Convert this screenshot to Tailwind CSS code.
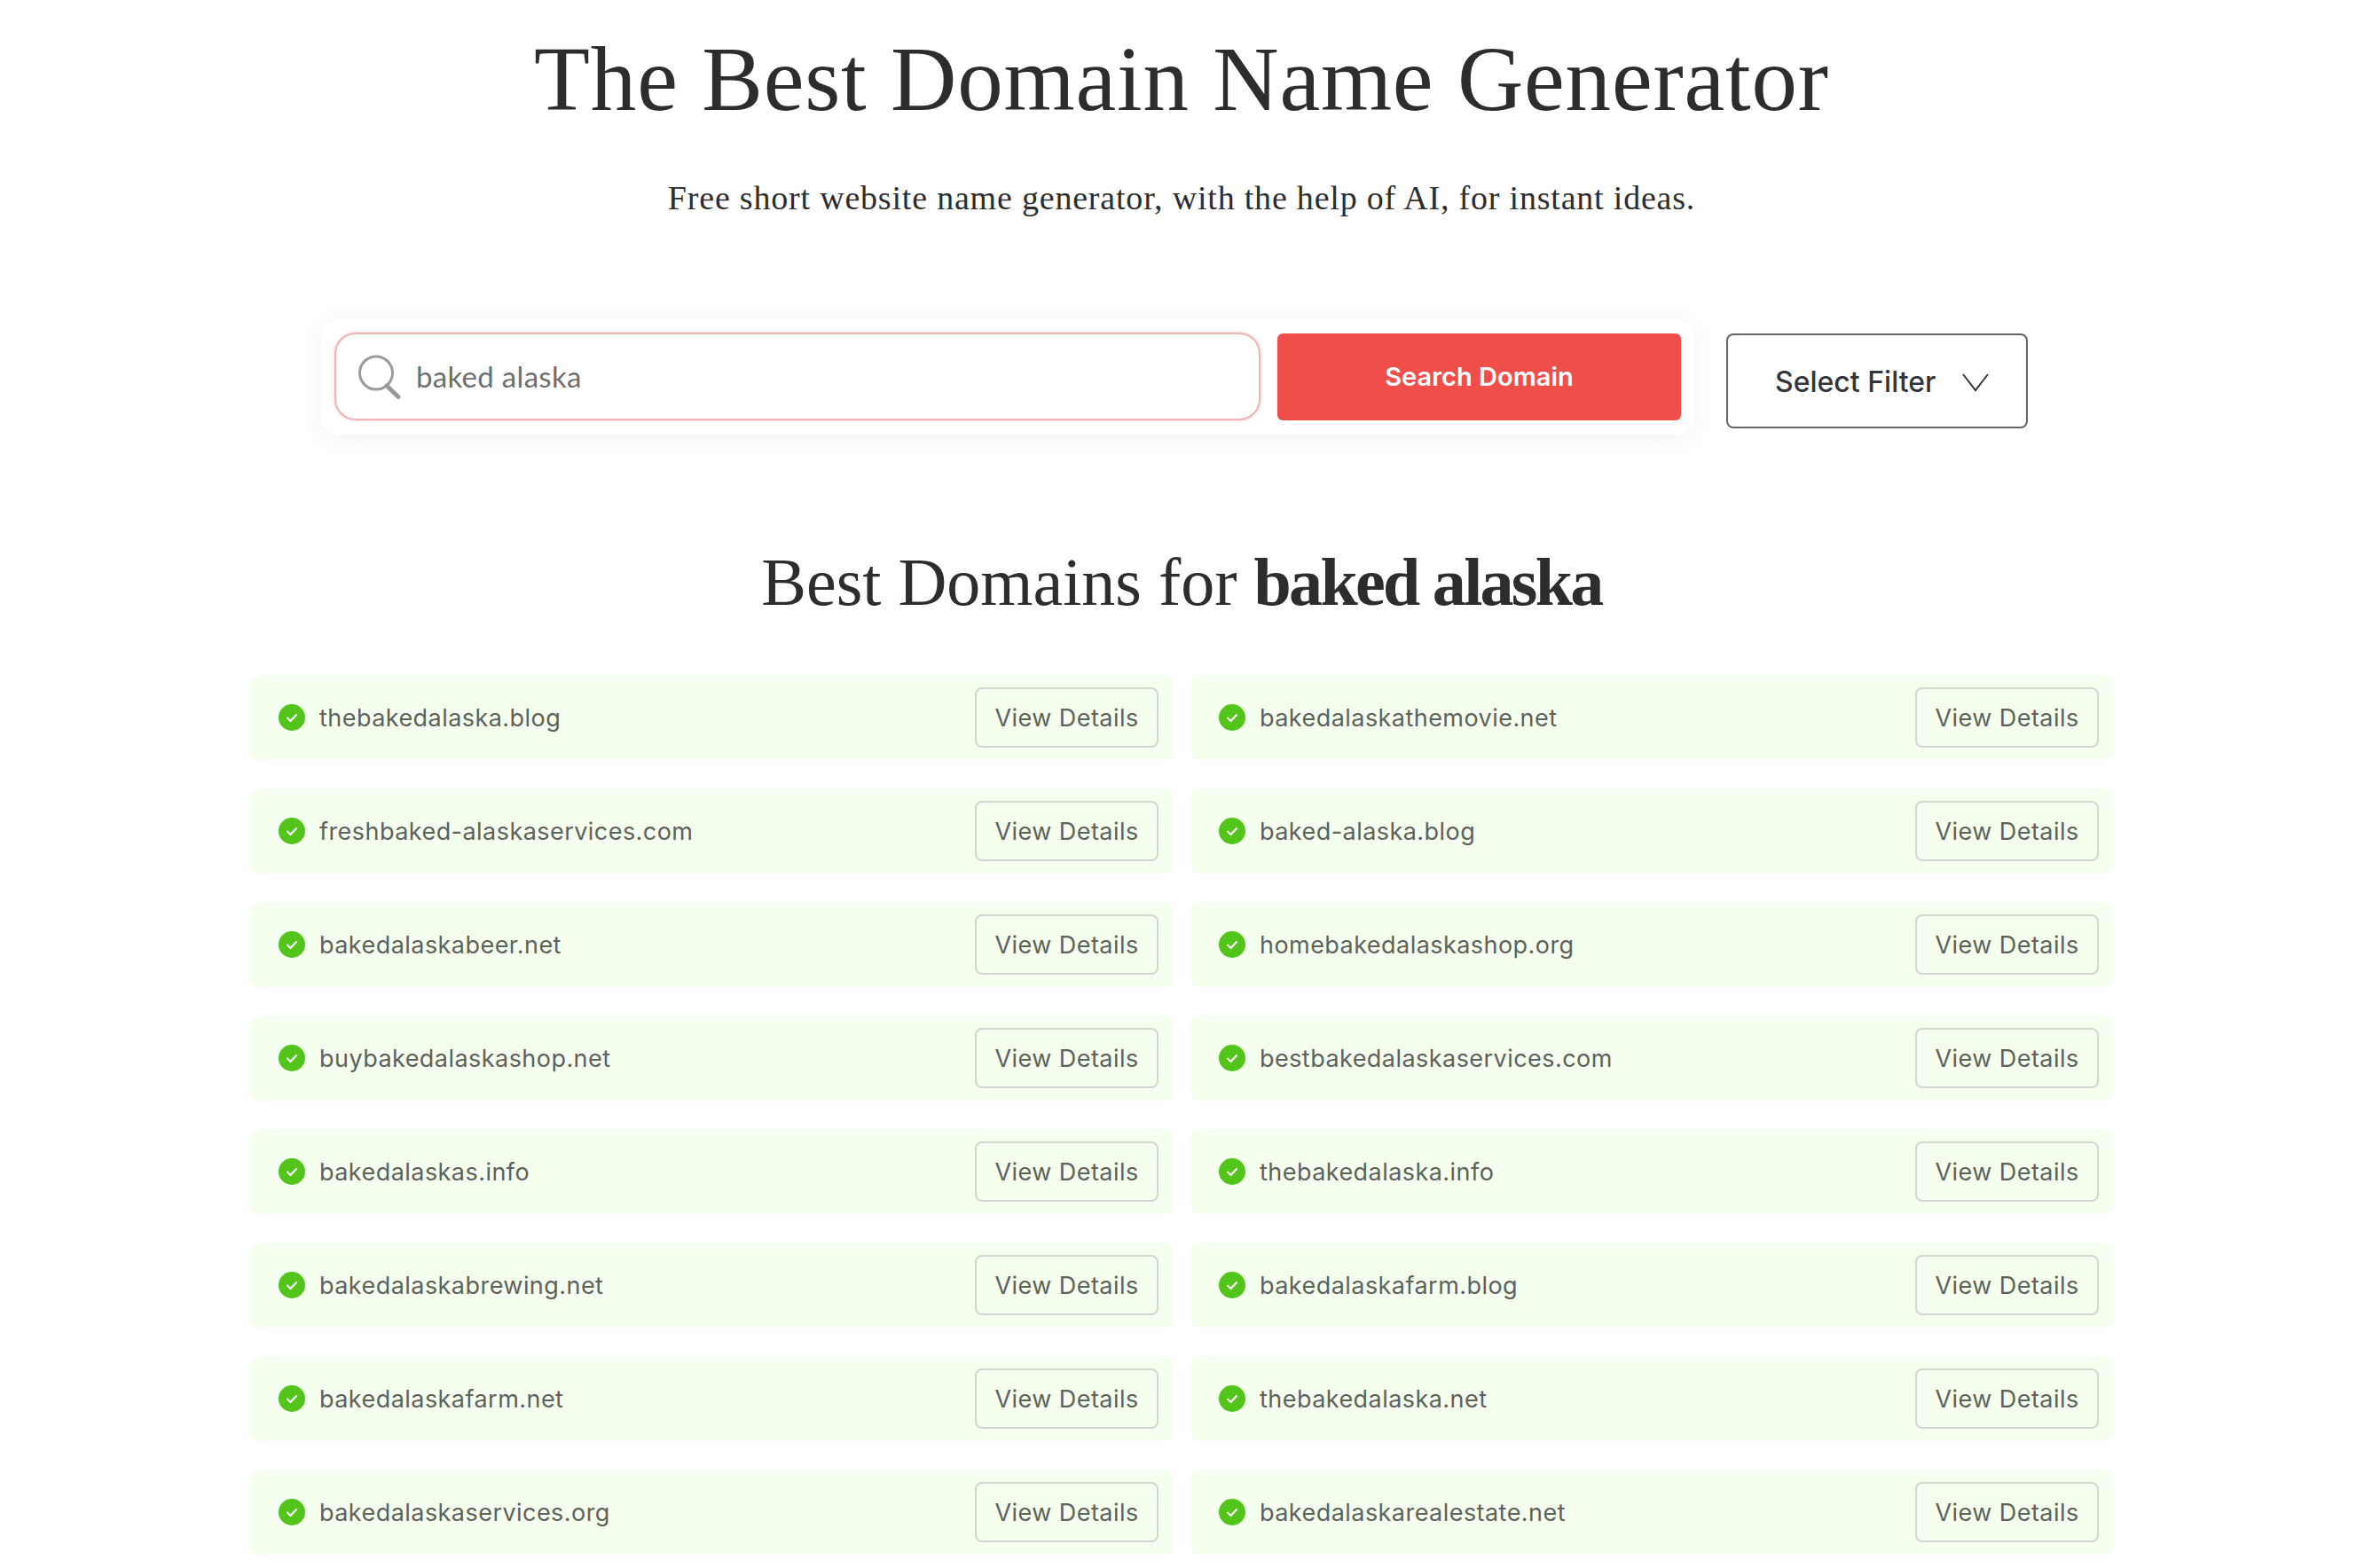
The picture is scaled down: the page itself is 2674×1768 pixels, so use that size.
<!DOCTYPE html>
<html lang="en">
<head>
    <meta charset="UTF-8">
    <title>The Best Domain Name Generator</title>
    <script src="https://cdn.jsdelivr.net/npm/@tailwindcss/browser@4"></script>
</head>
<body class="bg-white overflow-hidden h-[1768px]">
    <!-- Heading -->
    <div class="text-center w-[2100px] ml-[282px] pt-[33px]">
        <h1 class="font-['Liberation_Serif',serif] text-[103px] leading-[112px] tracking-[0.8px] text-[#2d2d2d]">The Best Domain Name Generator</h1>
        <p class="font-['Liberation_Serif',serif] text-[38px] leading-[48px] tracking-[0.8px] mt-[54px] text-[#2d2d2d]">Free short website name generator, with the help of AI, for instant ideas.</p>
    </div>

    <!-- Search -->
    <div class="flex items-start ml-[361px] mt-[113px]">
        <div class="flex gap-[19px] w-[1549px] h-[130px] pl-[16px] pt-[15px] bg-white rounded-[20px] shadow-[0_4px_30px_rgba(0,0,0,0.06)]">
            <div class="flex items-center gap-[15px] w-[1044px] h-[99px] pl-[25px] rounded-[24px] border-2 border-[#eeb4b4] shadow-[0_0_3px_rgba(220,120,120,0.5)]">
                <svg class="w-[50px] h-[50px]" viewBox="0 0 50 50" fill="none" stroke="#999b9b">
                    <circle cx="20" cy="20.5" r="18.5" stroke-width="3"/>
                    <path d="M32 35 L45 47.5" stroke-width="5" stroke-linecap="round"/>
                </svg>
                <span class="font-['Lato',sans-serif] text-[33px] tracking-[0.3px] text-[#6d6e6e]">baked alaska</span>
            </div>
            <button class="w-[455px] h-[98px] mt-px bg-[#f04e4a] rounded-[6px] text-white font-['Inter',sans-serif] font-semibold text-[29px]">Search Domain</button>
        </div>
        <button class="flex items-center gap-[30px] ml-[36px] mt-[16px] w-[340px] h-[107px] pl-[53px] pt-[2px] border-2 border-[#666] rounded-[8px] bg-white font-['Inter',sans-serif] font-medium text-[32px] text-[#32363c]">
            Select Filter
            <svg class="w-[30px] h-[22px]" viewBox="0 0 30 22" fill="none" stroke="#32363c" stroke-width="2"><path d="M1 2 L15 20 L29 2"/></svg>
        </button>
    </div>

    <h2 class="text-center w-[2100px] ml-[282px] mt-[121px] font-['Liberation_Serif',serif] text-[76px] leading-[90px] text-[#2d2d2d]">Best Domains for <b class="tracking-[-2.7px]">baked alaska</b></h2>

    <!-- Domain list -->
    <div class="grid grid-cols-2 gap-x-[20px] gap-y-[32px] w-[2100px] ml-[282px] mt-[60px] font-['Inter',sans-serif] text-[#5f615c] text-[27px] tracking-[0.45px]">
        <div class="flex items-center justify-between h-[96px] bg-[#f5ffee] rounded-[10px] pl-[32px] pr-[16px]"><div class="flex items-center gap-[16px]"><svg class="w-[30px] h-[30px]" viewBox="0 0 30 30"><circle cx="15" cy="15" r="15" fill="#52c41a"/><path d="M9.5 15 L13.5 19 L20.5 11.5" fill="none" stroke="#fff" stroke-width="2"/></svg><span class="pt-[2px]">thebakedalaska.blog</span></div><button class="w-[207px] h-[68px] pt-[2px] border-2 border-[#d4d4d4] rounded-[8px]">View Details</button></div>
        <div class="flex items-center justify-between h-[96px] bg-[#f5ffee] rounded-[10px] pl-[32px] pr-[16px]"><div class="flex items-center gap-[16px]"><svg class="w-[30px] h-[30px]" viewBox="0 0 30 30"><circle cx="15" cy="15" r="15" fill="#52c41a"/><path d="M9.5 15 L13.5 19 L20.5 11.5" fill="none" stroke="#fff" stroke-width="2"/></svg><span class="pt-[2px]">bakedalaskathemovie.net</span></div><button class="w-[207px] h-[68px] pt-[2px] border-2 border-[#d4d4d4] rounded-[8px]">View Details</button></div>
        <div class="flex items-center justify-between h-[96px] bg-[#f5ffee] rounded-[10px] pl-[32px] pr-[16px]"><div class="flex items-center gap-[16px]"><svg class="w-[30px] h-[30px]" viewBox="0 0 30 30"><circle cx="15" cy="15" r="15" fill="#52c41a"/><path d="M9.5 15 L13.5 19 L20.5 11.5" fill="none" stroke="#fff" stroke-width="2"/></svg><span class="pt-[2px]">freshbaked-alaskaservices.com</span></div><button class="w-[207px] h-[68px] pt-[2px] border-2 border-[#d4d4d4] rounded-[8px]">View Details</button></div>
        <div class="flex items-center justify-between h-[96px] bg-[#f5ffee] rounded-[10px] pl-[32px] pr-[16px]"><div class="flex items-center gap-[16px]"><svg class="w-[30px] h-[30px]" viewBox="0 0 30 30"><circle cx="15" cy="15" r="15" fill="#52c41a"/><path d="M9.5 15 L13.5 19 L20.5 11.5" fill="none" stroke="#fff" stroke-width="2"/></svg><span class="pt-[2px]">baked-alaska.blog</span></div><button class="w-[207px] h-[68px] pt-[2px] border-2 border-[#d4d4d4] rounded-[8px]">View Details</button></div>
        <div class="flex items-center justify-between h-[96px] bg-[#f5ffee] rounded-[10px] pl-[32px] pr-[16px]"><div class="flex items-center gap-[16px]"><svg class="w-[30px] h-[30px]" viewBox="0 0 30 30"><circle cx="15" cy="15" r="15" fill="#52c41a"/><path d="M9.5 15 L13.5 19 L20.5 11.5" fill="none" stroke="#fff" stroke-width="2"/></svg><span class="pt-[2px]">bakedalaskabeer.net</span></div><button class="w-[207px] h-[68px] pt-[2px] border-2 border-[#d4d4d4] rounded-[8px]">View Details</button></div>
        <div class="flex items-center justify-between h-[96px] bg-[#f5ffee] rounded-[10px] pl-[32px] pr-[16px]"><div class="flex items-center gap-[16px]"><svg class="w-[30px] h-[30px]" viewBox="0 0 30 30"><circle cx="15" cy="15" r="15" fill="#52c41a"/><path d="M9.5 15 L13.5 19 L20.5 11.5" fill="none" stroke="#fff" stroke-width="2"/></svg><span class="pt-[2px]">homebakedalaskashop.org</span></div><button class="w-[207px] h-[68px] pt-[2px] border-2 border-[#d4d4d4] rounded-[8px]">View Details</button></div>
        <div class="flex items-center justify-between h-[96px] bg-[#f5ffee] rounded-[10px] pl-[32px] pr-[16px]"><div class="flex items-center gap-[16px]"><svg class="w-[30px] h-[30px]" viewBox="0 0 30 30"><circle cx="15" cy="15" r="15" fill="#52c41a"/><path d="M9.5 15 L13.5 19 L20.5 11.5" fill="none" stroke="#fff" stroke-width="2"/></svg><span class="pt-[2px]">buybakedalaskashop.net</span></div><button class="w-[207px] h-[68px] pt-[2px] border-2 border-[#d4d4d4] rounded-[8px]">View Details</button></div>
        <div class="flex items-center justify-between h-[96px] bg-[#f5ffee] rounded-[10px] pl-[32px] pr-[16px]"><div class="flex items-center gap-[16px]"><svg class="w-[30px] h-[30px]" viewBox="0 0 30 30"><circle cx="15" cy="15" r="15" fill="#52c41a"/><path d="M9.5 15 L13.5 19 L20.5 11.5" fill="none" stroke="#fff" stroke-width="2"/></svg><span class="pt-[2px]">bestbakedalaskaservices.com</span></div><button class="w-[207px] h-[68px] pt-[2px] border-2 border-[#d4d4d4] rounded-[8px]">View Details</button></div>
        <div class="flex items-center justify-between h-[96px] bg-[#f5ffee] rounded-[10px] pl-[32px] pr-[16px]"><div class="flex items-center gap-[16px]"><svg class="w-[30px] h-[30px]" viewBox="0 0 30 30"><circle cx="15" cy="15" r="15" fill="#52c41a"/><path d="M9.5 15 L13.5 19 L20.5 11.5" fill="none" stroke="#fff" stroke-width="2"/></svg><span class="pt-[2px]">bakedalaskas.info</span></div><button class="w-[207px] h-[68px] pt-[2px] border-2 border-[#d4d4d4] rounded-[8px]">View Details</button></div>
        <div class="flex items-center justify-between h-[96px] bg-[#f5ffee] rounded-[10px] pl-[32px] pr-[16px]"><div class="flex items-center gap-[16px]"><svg class="w-[30px] h-[30px]" viewBox="0 0 30 30"><circle cx="15" cy="15" r="15" fill="#52c41a"/><path d="M9.5 15 L13.5 19 L20.5 11.5" fill="none" stroke="#fff" stroke-width="2"/></svg><span class="pt-[2px]">thebakedalaska.info</span></div><button class="w-[207px] h-[68px] pt-[2px] border-2 border-[#d4d4d4] rounded-[8px]">View Details</button></div>
        <div class="flex items-center justify-between h-[96px] bg-[#f5ffee] rounded-[10px] pl-[32px] pr-[16px]"><div class="flex items-center gap-[16px]"><svg class="w-[30px] h-[30px]" viewBox="0 0 30 30"><circle cx="15" cy="15" r="15" fill="#52c41a"/><path d="M9.5 15 L13.5 19 L20.5 11.5" fill="none" stroke="#fff" stroke-width="2"/></svg><span class="pt-[2px]">bakedalaskabrewing.net</span></div><button class="w-[207px] h-[68px] pt-[2px] border-2 border-[#d4d4d4] rounded-[8px]">View Details</button></div>
        <div class="flex items-center justify-between h-[96px] bg-[#f5ffee] rounded-[10px] pl-[32px] pr-[16px]"><div class="flex items-center gap-[16px]"><svg class="w-[30px] h-[30px]" viewBox="0 0 30 30"><circle cx="15" cy="15" r="15" fill="#52c41a"/><path d="M9.5 15 L13.5 19 L20.5 11.5" fill="none" stroke="#fff" stroke-width="2"/></svg><span class="pt-[2px]">bakedalaskafarm.blog</span></div><button class="w-[207px] h-[68px] pt-[2px] border-2 border-[#d4d4d4] rounded-[8px]">View Details</button></div>
        <div class="flex items-center justify-between h-[96px] bg-[#f5ffee] rounded-[10px] pl-[32px] pr-[16px]"><div class="flex items-center gap-[16px]"><svg class="w-[30px] h-[30px]" viewBox="0 0 30 30"><circle cx="15" cy="15" r="15" fill="#52c41a"/><path d="M9.5 15 L13.5 19 L20.5 11.5" fill="none" stroke="#fff" stroke-width="2"/></svg><span class="pt-[2px]">bakedalaskafarm.net</span></div><button class="w-[207px] h-[68px] pt-[2px] border-2 border-[#d4d4d4] rounded-[8px]">View Details</button></div>
        <div class="flex items-center justify-between h-[96px] bg-[#f5ffee] rounded-[10px] pl-[32px] pr-[16px]"><div class="flex items-center gap-[16px]"><svg class="w-[30px] h-[30px]" viewBox="0 0 30 30"><circle cx="15" cy="15" r="15" fill="#52c41a"/><path d="M9.5 15 L13.5 19 L20.5 11.5" fill="none" stroke="#fff" stroke-width="2"/></svg><span class="pt-[2px]">thebakedalaska.net</span></div><button class="w-[207px] h-[68px] pt-[2px] border-2 border-[#d4d4d4] rounded-[8px]">View Details</button></div>
        <div class="flex items-center justify-between h-[96px] bg-[#f5ffee] rounded-[10px] pl-[32px] pr-[16px]"><div class="flex items-center gap-[16px]"><svg class="w-[30px] h-[30px]" viewBox="0 0 30 30"><circle cx="15" cy="15" r="15" fill="#52c41a"/><path d="M9.5 15 L13.5 19 L20.5 11.5" fill="none" stroke="#fff" stroke-width="2"/></svg><span class="pt-[2px]">bakedalaskaservices.org</span></div><button class="w-[207px] h-[68px] pt-[2px] border-2 border-[#d4d4d4] rounded-[8px]">View Details</button></div>
        <div class="flex items-center justify-between h-[96px] bg-[#f5ffee] rounded-[10px] pl-[32px] pr-[16px]"><div class="flex items-center gap-[16px]"><svg class="w-[30px] h-[30px]" viewBox="0 0 30 30"><circle cx="15" cy="15" r="15" fill="#52c41a"/><path d="M9.5 15 L13.5 19 L20.5 11.5" fill="none" stroke="#fff" stroke-width="2"/></svg><span class="pt-[2px]">bakedalaskarealestate.net</span></div><button class="w-[207px] h-[68px] pt-[2px] border-2 border-[#d4d4d4] rounded-[8px]">View Details</button></div>
    </div>
</body>
</html>
